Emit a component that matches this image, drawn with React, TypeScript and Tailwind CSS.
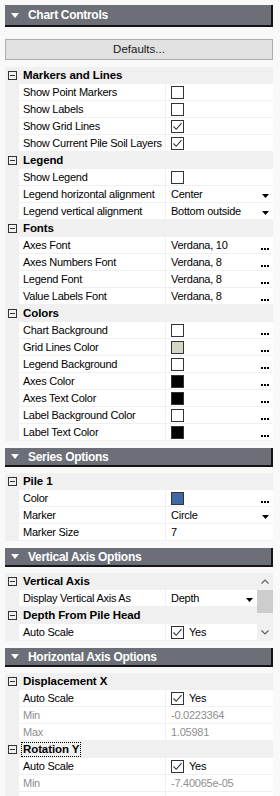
import React from 'react'

type Right = 'arrow' | 'dots' | undefined

interface RowProps {
  label: string
  value?: React.ReactNode
  right?: Right
  dim?: boolean
}

const Check = ({ checked }: { checked: boolean }) => (
  <span className="w-[13px] h-[13px] border border-[#333] bg-white flex items-center justify-center shrink-0">
    {checked && (
      <svg width="11" height="11" viewBox="0 0 11 11">
        <path d="M1.5 5.5 L4.2 8.3 L9.5 2.2" fill="none" stroke="#333" strokeWidth="1.1" />
      </svg>
    )}
  </span>
)

const Swatch = ({ color }: { color: string }) => (
  <span className="w-[13px] h-[13px] border border-[#333] shrink-0" style={{ background: color }} />
)

const Arrow = () => (
  <svg width="7" height="4" viewBox="0 0 7 4" className="mt-[4px]">
    <path d="M0 0 H7 L3.5 4 Z" fill="#000" />
  </svg>
)

const Dots = () => (
  <svg width="8" height="2" viewBox="0 0 8 2" className="mt-[7px]">
    <rect x="0" y="0" width="2" height="2" fill="#000" />
    <rect x="3" y="0" width="2" height="2" fill="#000" />
    <rect x="6" y="0" width="2" height="2" fill="#000" />
  </svg>
)

const Row = ({ label, value, right, dim }: RowProps) => (
  <div className="flex h-[17px]">
    <div className="w-[14px] bg-[#f0f0f0] shrink-0" />
    <div
      className={`w-[147px] shrink-0 pl-[4px] border-r border-b border-[#f0f0f0] bg-white leading-[16px] whitespace-nowrap ${
        dim ? 'text-[#8e8e8e]' : 'text-black'
      }`}
    >
      {label}
    </div>
    <div
      className={`flex-1 flex items-center pl-[5px] pr-[4px] border-b border-[#f0f0f0] bg-white leading-[16px] whitespace-nowrap ${
        dim ? 'text-[#8e8e8e]' : 'text-black'
      }`}
    >
      <div className="flex-1 flex items-center gap-[5px]">{value}</div>
      {right === 'arrow' && <Arrow />}
      {right === 'dots' && <Dots />}
    </div>
  </div>
)

const Group = ({ title, focus }: { title: string; focus?: boolean }) => (
  <div className="flex items-center h-[17px] bg-[#f0f0f0]">
    <div className="w-[14px] flex justify-center shrink-0">
      <svg width="9" height="9" viewBox="0 0 9 9">
        <rect x="0.5" y="0.5" width="8" height="8" fill="none" stroke="#333" />
        <path d="M2 4.5 H7" stroke="#333" />
      </svg>
    </div>
    <span
      className={`font-bold text-[11.5px] tracking-[-0.1px] ${
        focus ? 'ml-[2px] px-[1px] border border-dotted border-black leading-[13px]' : 'ml-[4px]'
      }`}
    >
      {title}
    </span>
  </div>
)

const Header = ({ title, tall }: { title: string; tall?: boolean }) => (
  <div
    className={`flex items-center bg-[#6c6f77] border-r-2 border-b-2 border-[#151515] pl-[6px] ${
      tall ? 'h-[22px]' : 'h-[19px]'
    }`}
  >
    <svg width="8" height="5" viewBox="0 0 8 5">
      <path d="M0 0 H8 L4 5 Z" fill="#fff" />
    </svg>
    <span className="ml-[9px] text-white font-bold text-[12px] tracking-[-0.3px]">{title}</span>
  </div>
)

const YesCheck = () => (
  <>
    <Check checked />
    <span>Yes</span>
  </>
)

const ScrollBar = () => (
  <div className="w-[16px] bg-[#f0f0f0] flex flex-col shrink-0">
    <div className="h-[17px] flex items-center justify-center">
      <svg width="8" height="5" viewBox="0 0 8 5">
        <path d="M0.5 4.5 L4 1 L7.5 4.5" fill="none" stroke="#606060" strokeWidth="1.2" />
      </svg>
    </div>
    <div className="h-[23px] bg-[#cdcdcd]" />
    <div className="flex-1" />
    <div className="h-[17px] flex items-center justify-center">
      <svg width="8" height="5" viewBox="0 0 8 5">
        <path d="M0.5 0.5 L4 4 L7.5 0.5" fill="none" stroke="#606060" strokeWidth="1.2" />
      </svg>
    </div>
  </div>
)

export default function App() {
  return (
    <div className="w-[280px] h-[796px] overflow-hidden bg-[#f9f9f9] font-['Liberation_Sans',Arial,sans-serif] text-[11px] tracking-[-0.25px] text-black">
      <div className="ml-[5px] w-[268px] pt-[5px]">
        <Header title="Chart Controls" tall />

        <button className="mt-[12px] w-full h-[21px] bg-[#e1e1e1] border border-[#adadad] text-[11.5px] tracking-[0px] text-[#1a1a1a]">
          Defaults...
        </button>

        <div className="mt-[7px]">
          <Group title="Markers and Lines" />
          <Row label="Show Point Markers" value={<Check checked={false} />} />
          <Row label="Show Labels" value={<Check checked={false} />} />
          <Row label="Show Grid Lines" value={<Check checked />} />
          <Row label="Show Current Pile Soil Layers" value={<Check checked />} />
          <Group title="Legend" />
          <Row label="Show Legend" value={<Check checked={false} />} />
          <Row label="Legend horizontal alignment" value="Center" right="arrow" />
          <Row label="Legend vertical alignment" value="Bottom outside" right="arrow" />
          <Group title="Fonts" />
          <Row label="Axes Font" value="Verdana, 10" right="dots" />
          <Row label="Axes Numbers Font" value="Verdana, 8" right="dots" />
          <Row label="Legend Font" value="Verdana, 8" right="dots" />
          <Row label="Value Labels Font" value="Verdana, 8" right="dots" />
          <Group title="Colors" />
          <Row label="Chart Background" value={<Swatch color="#ffffff" />} right="dots" />
          <Row label="Grid Lines Color" value={<Swatch color="#d6d6c6" />} right="dots" />
          <Row label="Legend Background" value={<Swatch color="#ffffff" />} right="dots" />
          <Row label="Axes Color" value={<Swatch color="#000000" />} right="dots" />
          <Row label="Axes Text Color" value={<Swatch color="#000000" />} right="dots" />
          <Row label="Label Background Color" value={<Swatch color="#ffffff" />} right="dots" />
          <Row label="Label Text Color" value={<Swatch color="#000000" />} right="dots" />
        </div>

        <div className="mt-[7px]">
          <Header title="Series Options" />
        </div>
        <div className="mt-[6px]">
          <Group title="Pile 1" />
          <Row label="Color" value={<Swatch color="#3f69a6" />} right="dots" />
          <Row label="Marker" value="Circle" right="arrow" />
          <Row label="Marker Size" value="7" />
        </div>

        <div className="mt-[7px]">
          <Header title="Vertical Axis Options" />
        </div>
        <div className="mt-[6px] flex">
          <div className="flex-1">
            <Group title="Vertical Axis" />
            <Row label="Display Vertical Axis As" value="Depth" right="arrow" />
            <Group title="Depth From Pile Head" />
            <Row label="Auto Scale" value={<YesCheck />} />
          </div>
          <ScrollBar />
        </div>

        <div className="mt-[7px]">
          <Header title="Horizontal Axis Options" />
        </div>
        <div className="mt-[6px]">
          <Group title="Displacement X" />
          <Row label="Auto Scale" value={<YesCheck />} />
          <Row label="Min" value="-0.0223364" dim />
          <Row label="Max" value="1.05981" dim />
          <Group title="Rotation Y" focus />
          <Row label="Auto Scale" value={<YesCheck />} />
          <Row label="Min" value="-7.40065e-05" dim />
          <Row label="" />
        </div>
      </div>
    </div>
  )
}
